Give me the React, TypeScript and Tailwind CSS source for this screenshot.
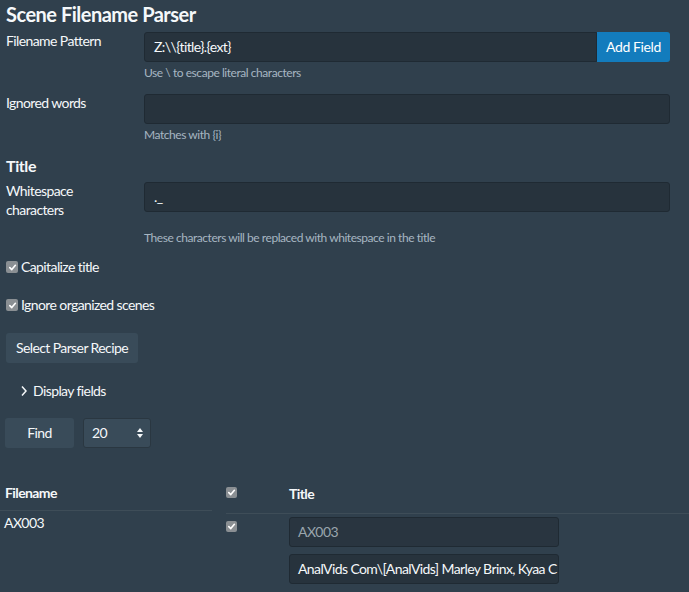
import React from "react";

const Check = ({ size = 12 }: { size?: number }) => (
  <span
    className="inline-flex shrink-0 items-center justify-center rounded-[2px] bg-[#8a8f93]"
    style={{ width: size, height: size }}
  >
    <svg width="9" height="9" viewBox="0 0 10 10">
      <path d="M2 5.2 L4.2 7.3 L8.2 2.6" fill="none" stroke="#ffffff" strokeWidth="1.8" strokeLinecap="round" strokeLinejoin="round" />
    </svg>
  </span>
);

export default function App() {
  return (
    <div
      className="min-h-screen w-full bg-[#30404d] text-[14px] leading-[20px] tracking-[-0.6px] text-[#f5f8fa]"
      style={{ fontFamily: "Lato, 'Liberation Sans', sans-serif" }}
    >
      <div className="pl-[6px] pr-[19px]">
        <h4 className="pt-[1px] text-[20px] font-bold leading-[26px] tracking-[-0.5px]">Scene Filename Parser</h4>

        {/* Filename pattern */}
        <div className="mt-[5px] flex">
          <label className="-mt-[1px] w-[138px] shrink-0">Filename Pattern</label>
          <div className="flex flex-1">
            <div className="flex h-[30px] flex-1 items-center rounded-l-[3px] border border-[#1f2a33] bg-[#27333d] px-[9px]">
              Z:\\{"{title}"}.{"{ext}"}
            </div>
            <button className="h-[30px] w-[73px] rounded-r-[3px] bg-[#137cbd] text-[14px] tracking-[-0.4px] text-white">Add Field</button>
          </div>
        </div>
        <div className="pl-[138px] pt-[3px] text-[12px] leading-[16px] tracking-[-0.45px] text-[#a7b6c2]">Use \ to escape literal characters</div>

        {/* Ignored words */}
        <div className="mt-[13px] flex">
          <label className="-mt-[1px] w-[138px] shrink-0">Ignored words</label>
          <div className="h-[30px] flex-1 rounded-[3px] border border-[#1f2a33] bg-[#27333d]" />
        </div>
        <div className="pl-[138px] pt-[3px] text-[12px] leading-[16px] tracking-[-0.45px] text-[#a7b6c2]">Matches with {"{i}"}</div>

        <h5 className="mt-[13px] text-[16px] font-bold leading-[20px] tracking-[-0.4px]">Title</h5>

        {/* Whitespace */}
        <div className="mt-[6px] flex">
          <label className="-mt-[1px] w-[138px] shrink-0 leading-[19px]">
            Whitespace
            <br />
            characters
          </label>
          <div className="flex h-[30px] flex-1 items-center rounded-[3px] border border-[#1f2a33] bg-[#27333d] px-[9px]">._</div>
        </div>
        <div className="pl-[138px] pt-[11px] text-[12px] leading-[16px] tracking-[-0.45px] text-[#a7b6c2]">
          These characters will be replaced with whitespace in the title
        </div>

        <div className="mt-[11px] flex items-center gap-[3px]">
          <Check />
          <span>Capitalize title</span>
        </div>
        <div className="mt-[18px] flex items-center gap-[3px]">
          <Check />
          <span>Ignore organized scenes</span>
        </div>

        <button className="mt-[18px] h-[30px] rounded-[3px] bg-[#394b59] px-[10px] text-[14px]">Select Parser Recipe</button>

        <div className="mt-[18px] flex items-center pl-[14px]">
          <svg width="8" height="12" viewBox="0 0 8 12" className="mr-[5px]">
            <path d="M2 1.5 L6 6 L2 10.5" fill="none" stroke="#f5f8fa" strokeWidth="1.5" />
          </svg>
          <span>Display fields</span>
        </div>

        <div className="mt-[17px] -ml-[1px] flex gap-[9px]">
          <button className="h-[30px] w-[69px] rounded-[3px] bg-[#394b59] text-[14px]">Find</button>
          <div className="flex h-[30px] w-[68px] items-center justify-between rounded-[3px] border border-[#2a3741] bg-[#394b59] pl-[8px] pr-[6px]">
            <span>20</span>
            <svg width="8" height="12" viewBox="0 0 8 12">
              <path d="M4 1 L7 5 L1 5 Z" fill="#f5f8fa" />
              <path d="M4 11 L7 7 L1 7 Z" fill="#f5f8fa" />
            </svg>
          </div>
        </div>
      </div>

      {/* Table */}
      <div className="mt-[33px] flex">
        <div className="w-[212px] shrink-0">
          <div className="h-[30px] border-b border-[#3e4d58] pl-[5px] pt-[2px] font-bold">Filename</div>
          <div className="pl-[4px] pt-[2px]">AX003</div>
        </div>
        <div className="flex-1 pl-[14px]">
          <div className="flex h-[33px] border-b border-[#3e4d58] pt-[1px]">
            <div className="w-[63px]">
              <Check size={11} />
            </div>
            <div className="pt-[2px] font-bold">Title</div>
          </div>
          <div className="flex pt-[3px]">
            <div className="-mt-[1px] w-[63px]">
              <Check size={11} />
            </div>
            <div className="flex w-[270px] flex-col gap-[7px]">
              <div className="flex h-[30px] items-center rounded-[3px] border border-[#1f2a33] bg-[#293540] px-[8px] text-[#9aa5ad]">AX003</div>
              <div className="flex h-[30px] items-center overflow-hidden whitespace-nowrap rounded-[3px] border border-[#1f2a33] bg-[#27333d] px-[8px]">
                AnalVids Com\[AnalVids] Marley Brinx, Kyaa C
              </div>
            </div>
          </div>
        </div>
      </div>
    </div>
  );
}
